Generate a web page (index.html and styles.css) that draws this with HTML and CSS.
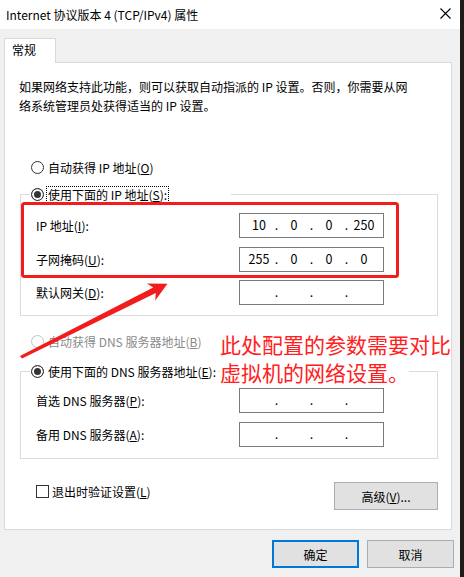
FILE: index.html
```html
<!DOCTYPE html>
<html lang="zh-CN">
<head>
    <meta charset="UTF-8">
    <title>Internet 协议版本 4 (TCP/IPv4) 属性</title>
    <link rel="stylesheet" href="styles.css">
</head>
<body>
    <div class="window">
        <div class="titlebar">
            <span class="title">Internet 协议版本 4 (TCP/IPv4) 属性</span>
            <svg class="close" width="11" height="11" viewBox="0 0 11 11">
                <path d="M0.5 0.5 L10.5 10.5 M10.5 0.5 L0.5 10.5" stroke="#000" stroke-width="1.1" fill="none"/>
            </svg>
        </div>

        <div class="tabs">
            <div class="tab">常规</div>
        </div>

        <div class="panel">
            <p class="intro">如果网络支持此功能，则可以获取自动指派的 IP 设置。否则，你需要从网<br>络系统管理员处获得适当的 IP 设置。</p>

            <div class="option first">
                <span class="radio"></span>
                <span class="label">自动获得 IP 地址(<u>O</u>)</span>
            </div>

            <fieldset class="group ip-group">
                <legend class="option legend-ip">
                    <span class="radio on"></span>
                    <span class="label focus">使用下面的 IP 地址(<u>S</u>):</span>
                </legend>
                <div class="row">
                    <span class="name">IP 地址(<u>I</u>):</span>
                    <div class="ip"><span>10</span><i>.</i><span>0</span><i>.</i><span>0</span><i>.</i><span>250</span></div>
                </div>
                <div class="row">
                    <span class="name">子网掩码(<u>U</u>):</span>
                    <div class="ip"><span>255</span><i>.</i><span>0</span><i>.</i><span>0</span><i>.</i><span>0</span></div>
                </div>
                <div class="row">
                    <span class="name">默认网关(<u>D</u>):</span>
                    <div class="ip"><span></span><i>.</i><span></span><i>.</i><span></span><i>.</i><span></span></div>
                </div>
            </fieldset>

            <div class="option dns-auto disabled">
                <span class="radio"></span>
                <span class="label">自动获得 DNS 服务器地址(<u>B</u>)</span>
            </div>

            <fieldset class="group dns-group">
                <legend class="option">
                    <span class="radio on"></span>
                    <span class="label">使用下面的 DNS 服务器地址(<u>E</u>):</span>
                </legend>
                <div class="row">
                    <span class="name">首选 DNS 服务器(<u>P</u>):</span>
                    <div class="ip"><span></span><i>.</i><span></span><i>.</i><span></span><i>.</i><span></span></div>
                </div>
                <div class="row">
                    <span class="name">备用 DNS 服务器(<u>A</u>):</span>
                    <div class="ip"><span></span><i>.</i><span></span><i>.</i><span></span><i>.</i><span></span></div>
                </div>
            </fieldset>

            <div class="bottom">
                <div class="check">
                    <span class="box"></span>
                    <span>退出时验证设置(<u>L</u>)</span>
                </div>
                <button class="btn advanced">高级(<u>V</u>)...</button>
            </div>
        </div>

        <div class="actions">
            <button class="btn default">确定</button>
            <button class="btn">取消</button>
        </div>

        <!-- annotation drawn over the dialog -->
        <svg class="markup" width="460" height="577" viewBox="0 0 460 577">
            <rect x="22.5" y="203.5" width="375" height="73" rx="2" fill="none" stroke="#f21c1c" stroke-width="3"/>
            <polygon points="20,356 153.2,287.6 146.9,283.5 167.5,283.8 155.2,300.6 155.8,293 22,358.5" fill="#f21c1c"/>
        </svg>
        <div class="note">
            <span>此处配置的参数需要对比</span>
            <span>虚拟机的网络设置。</span>
        </div>
    </div>
</body>
</html>
```

FILE: styles.css
```css
html, body {
    margin: 0;
    padding: 0;
    height: 577px;
    overflow: hidden;
}

body {
    background-color: #1f1c1a; /* desktop edge on the right */
    font-family: "Noto Sans CJK SC", "Noto Sans", sans-serif;
    font-size: 12px;
    color: #000;
}

.window {
    position: relative;
    width: 460px;
    height: 577px;
    background-color: #f0f0f0;
}

.titlebar {
    display: flex;
    align-items: center;
    justify-content: space-between;
    height: 29px;
    padding: 0 9px 1px 6px;
    box-sizing: border-box;
    background-color: #fff;
}

.close {
    display: block;
    margin-bottom: 2px;
}

.tabs {
    display: flex;
    padding: 9px 0 0 4px;
}

.tab {
    position: relative;
    width: 52px;
    height: 25px;
    margin-bottom: -1px;
    padding-left: 7px;
    box-sizing: border-box;
    line-height: 22px;
    background-color: #fff;
    border: 1px solid #d9d9d9;
    border-bottom: none;
}

.panel {
    height: 468px;
    margin: 0 8px 0 4px;
    box-sizing: border-box;
    background-color: #fff;
    border: 1px solid #d9d9d9;
}

.intro {
    margin: 0;
    padding: 15px 0 0 14px;
    line-height: 18.5px;
}

.option {
    display: flex;
    align-items: center;
    height: 17px;
    line-height: 17px;
}

.option.first {
    margin: 44px 0 10px 26px;
}

.radio {
    width: 13px;
    height: 13px;
    box-sizing: border-box;
    border: 1px solid #333;
    border-radius: 50%;
    background-color: #fff;
}

.radio.on {
    background-color: #333;
    box-shadow: inset 0 0 0 2px #fff;
}

.label {
    margin-left: 2px;
    padding: 0 1px;
    border: 1px dotted transparent;
    line-height: 15px;
}

.label.focus {
    border-color: #000;
}

.disabled {
    color: #8a8a8a;
}

.disabled .radio {
    border-color: #c4c4c4;
}

.group {
    margin: 0 13px 0 15px;
    padding: 0;
    min-inline-size: 0;
    border: 1px solid #dcdcdc;
}

.group legend {
    margin-left: 9px;
    padding: 0 0 0 1px;
}

.legend-ip {
    width: 201px;
    box-sizing: border-box;
}

.ip-group {
    padding: 10px 0 10px;
}

.ip-group .row + .row {
    margin-top: 8.5px;
}

.dns-auto {
    margin: 17px 0 13px 26px;
}

.dns-group {
    padding: 8px 0 11px;
}

.dns-group .row + .row {
    margin-top: 9px;
}

.row {
    display: flex;
    align-items: center;
    height: 25px;
    padding-left: 15px;
}

.name {
    width: 203px;
}

.ip {
    display: grid;
    grid-template-columns: 31px 4px 31px 4px 31px 4px 31px;
    width: 145px;
    height: 25px;
    padding-left: 3.5px;
    box-sizing: border-box;
    border: 1px solid #7a7a7a;
    line-height: 22px;
    font-size: 12.5px;
}

.ip span,
.ip i {
    text-align: center;
    font-style: normal;
}

.bottom {
    display: flex;
    justify-content: space-between;
    align-items: flex-start;
    margin: 23px 13px 0 31px;
}

.check {
    display: flex;
    align-items: center;
    gap: 3px;
    height: 17px;
    margin-top: 1px;
}

.box {
    width: 13px;
    height: 13px;
    box-sizing: border-box;
    border: 1px solid #333;
    background-color: #fff;
}

.btn {
    width: 87px;
    height: 28px;
    padding: 0;
    font-family: inherit;
    font-size: 12px;
    color: #000;
    background-color: #e1e1e1;
    border: 1px solid #adadad;
}

.btn.advanced {
    width: 104px;
}

.btn.default {
    border: 2px solid #0078d7;
}

.actions {
    display: flex;
    justify-content: flex-end;
    gap: 8px;
    margin: 10px 6px 0 0;
}

/* red markup on top of the screenshot */
.markup {
    position: absolute;
    top: 0;
    left: 0;
    pointer-events: none;
}

.note {
    position: absolute;
    left: 220px;
    top: 330px;
    font-size: 21px;
    line-height: 28px;
    color: #ff2121;
}

.note span {
    display: block;
    width: fit-content;
    background-color: #fff;
}
```
